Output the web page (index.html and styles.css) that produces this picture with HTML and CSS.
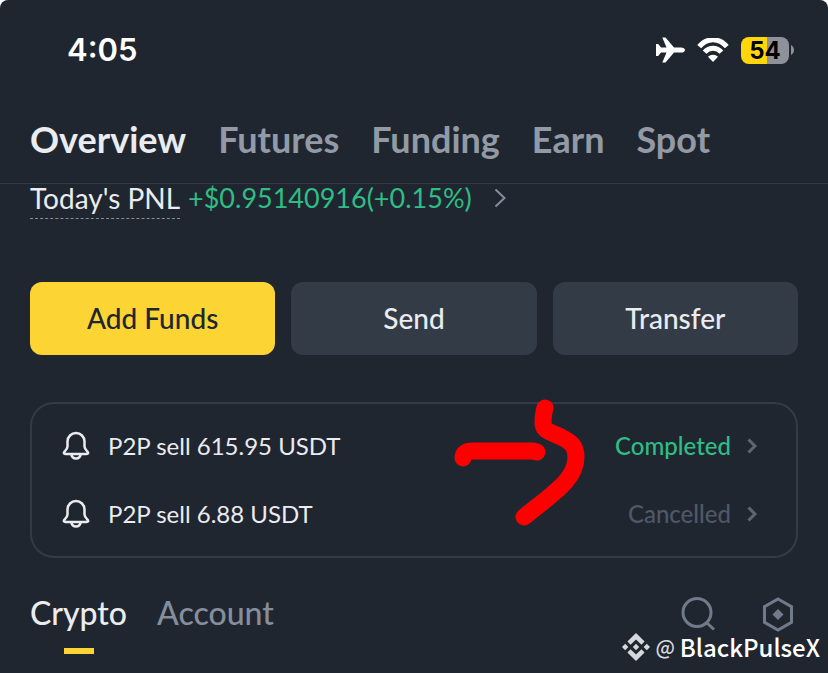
FILE: index.html
```html
<!DOCTYPE html>
<html lang="en">
<head>
<meta charset="utf-8">
<meta name="viewport" content="width=device-width, initial-scale=1">
<title>Wallet overview</title>
<link rel="stylesheet" href="styles.css">
</head>
<body>
<div class="app">
  <header class="status">
    <time class="clock">4:05</time>
    <div class="indicators">
      <svg class="plane" width="30" height="28" viewBox="0 0 30 28" aria-hidden="true"><path d="M30 14c0 1.700-1.800 2.600-4 2.600h-7L10.500 26.500H7.300L11.500 16.600H6L3.200 20H1V8h2.200L6 11.400h5.500L7.300 1.500h3.200L19 11.400h7c2.200 0 4 .9 4 2.600z"/></svg>
      <svg class="wifi" width="32" height="24" viewBox="0 0 32 24" aria-hidden="true"><path class="arc" d="M2.200 8.700C10-.6 22-.6 29.800 8.700M7.600 14.200c4.600-5.300 12.200-5.300 16.800 0"/><path d="M16 24l-5-5.200c2.600-2.800 7.400-2.800 10 0z"/></svg>
      <div class="battery"><span class="cell">54</span><svg width="3" height="10" viewBox="0 0 3 10" aria-hidden="true"><path d="M0 0c4 2 4 8 0 10z"/></svg></div>
    </div>
  </header>
  <nav class="tabs">
    <a class="active" href="#overview">Overview</a>
    <a href="#futures">Futures</a>
    <a href="#funding">Funding</a>
    <a href="#earn">Earn</a>
    <a href="#spot">Spot</a>
  </nav>
  <main>
    <a class="pnl" href="#pnl">
      <span class="pnl-label">Today's PNL</span>
      <span class="gain">+$0.95140916(+0.15%)</span>
      <svg width="12" height="20" viewBox="0 0 12 20" aria-hidden="true"><path d="M1.500 1.500L10.500 10l-9 8.500"/></svg>
    </a>
    <div class="actions">
      <button class="primary" type="button">Add Funds</button>
      <button type="button">Send</button>
      <button type="button">Transfer</button>
    </div>
    <section class="orders">
      <a class="order" href="#order-1">
        <svg class="bell" width="28" height="30" viewBox="0 0 28 30" aria-hidden="true"><path d="M5.500 10.500a8.500 8.500 0 0 1 17 0v5c0 2 1.200 3.300 2.800 5 1.500 1.500.9 2.500-.8 2.500h-21c-1.700 0-2.300-1-.8-2.500 1.600-1.700 2.800-3 2.800-5zM9.300 23.500c.6 2.700 2.200 4 4.700 4s4.100-1.300 4.700-4"/></svg>
        <span class="order-name">P2P sell 615.95 USDT</span>
        <span class="done">Completed</span>
        <svg class="chevron" width="10" height="16" viewBox="0 0 10 16" aria-hidden="true"><path d="M1.500 1.500L8 8l-6.500 6.500"/></svg>
      </a>
      <a class="order" href="#order-2">
        <svg class="bell" width="28" height="30" viewBox="0 0 28 30" aria-hidden="true"><path d="M5.500 10.500a8.500 8.500 0 0 1 17 0v5c0 2 1.200 3.300 2.800 5 1.500 1.500.9 2.500-.8 2.500h-21c-1.700 0-2.300-1-.8-2.500 1.600-1.700 2.800-3 2.800-5zM9.300 23.500c.6 2.700 2.200 4 4.700 4s4.100-1.300 4.700-4"/></svg>
        <span class="order-name">P2P sell 6.88 USDT</span>
        <span class="cancelled">Cancelled</span>
        <svg class="chevron" width="10" height="16" viewBox="0 0 10 16" aria-hidden="true"><path d="M1.500 1.500L8 8l-6.500 6.500"/></svg>
      </a>
      <svg class="marker" width="132" height="128" viewBox="0 0 132 128" aria-hidden="true"><path d="M9 59c0-5 3-7 10-7h60l4 1M91 9c-2 6-2 11-2 16 1 8 9 8 18 13 10 5 15 9 15 20 0 22-21 35-52 60"/></svg>
    </section>
    <div class="assets">
      <nav class="subtabs">
        <a class="active" href="#crypto">Crypto</a>
        <a href="#account">Account</a>
      </nav>
      <div class="tools">
        <button type="button" aria-label="Search"><svg width="36" height="36" viewBox="0 0 36 36"><circle cx="17" cy="16.500" r="14"/><path d="M27 27l7 6.500"/></svg></button>
        <button type="button" aria-label="Settings"><svg width="32" height="36" viewBox="0 0 32 36"><path d="M16 3l13.500 7.700v15.600L16 34 2.500 26.300V10.700z"/><path class="solid" d="M16 13l5.500 5.500L16 24l-5.500-5.500z"/></svg></button>
      </div>
    </div>
  </main>
  <div class="credit">
    <svg width="28" height="28" viewBox="0 0 28 28" aria-hidden="true"><path d="M14 0l8.600 8.600-3.200 3.200L14 6.400l-5.400 5.400-3.200-3.200zM3.200 10.800L6.400 14l-3.200 3.200L0 14zM14 10.800l3.200 3.200-3.200 3.200-3.200-3.200zM24.800 10.800L28 14l-3.200 3.200-3.200-3.200zM8.600 16.200l5.400 5.400 5.400-5.400 3.200 3.200L14 28l-8.600-8.600z"/></svg>
    <span class="at">@</span><span>BlackPulseX</span>
  </div>
</div>
</body>
</html>
```
FILE: styles.css
```css
* { box-sizing: border-box; }
body { margin: 0; background: #fff; font-family: Lato, "Liberation Sans", sans-serif; color: #eaecef; }
a { color: inherit; text-decoration: none; }
button { font: inherit; color: inherit; border: 0; padding: 0; background: none; }
svg { display: block; flex: none; fill: none; }
.app { position: relative; min-height: 100vh; background: #202630; border-radius: 8px 8px 0 0; overflow: hidden; }

.status { display: flex; align-items: center; justify-content: space-between; height: 100px; padding: 0 34px 0 67px; color: #fff; }
.clock { font: 600 31px/40px Inter, sans-serif; }
.indicators { display: flex; align-items: center; gap: 12px; }
.indicators > svg { fill: #fff; }
.wifi .arc { fill: none; stroke: #fff; stroke-width: 5; }
.battery { display: flex; align-items: center; gap: 2px; }
.battery svg { fill: #8e9199; }
.cell { width: 48px; border-radius: 8px; background: linear-gradient(90deg, #ffd60a 54%, #8e9199 54%); color: #000; font: 700 24px/27px Inter, sans-serif; text-align: center; }

.tabs { display: flex; align-items: center; gap: 32px; height: 84px; padding: 0 30px 6px; border-bottom: 1px solid #333b47; font-size: 36px; line-height: 42px; font-weight: 700; color: #929aa5; }
.tabs .active, .subtabs .active { color: #eaecef; }

main { padding: 0 30px; }
.pnl { display: flex; align-items: flex-start; gap: 8px; font-size: 27px; line-height: 28px; }
.pnl-label { padding-bottom: 6px; border-bottom: 1px dashed #848e9c; font-size: 28px; line-height: 28px; }
.gain { color: #2ebd85; }
.pnl svg { margin: 4px 0 0 14px; stroke: #848e9c; stroke-width: 2; }

.actions { display: grid; grid-template-columns: repeat(3, 1fr); gap: 16px; margin-top: 63px; }
.actions button { height: 73px; border-radius: 12px; background: #333b47; font-size: 28px; line-height: 32px; padding-bottom: 2px; font-weight: 500; }
.actions .primary { background: #fcd535; color: #202630; }

.orders { position: relative; margin-top: 47px; padding: 8px 39px 8px 30px; border: 2px solid #333b47; border-radius: 24px; }
.order { display: flex; align-items: center; height: 68px; font-size: 24px; line-height: 32px; }
.bell { stroke: #eaecef; stroke-width: 2.5; }
.order-name { flex: 1; margin-left: 18px; }
.done { color: #2ebd85; font-weight: 500; }
.cancelled { color: #4f5867; font-weight: 500; }
.chevron { margin-left: 16px; stroke: #5e6673; stroke-width: 3; }
.marker { position: absolute; left: 422px; top: -5px; stroke: #f00; stroke-width: 17; stroke-linecap: round; stroke-linejoin: round; }

.assets { display: flex; justify-content: space-between; margin-top: 35px; }
.subtabs { display: flex; gap: 30px; font-size: 32px; line-height: 40px; font-weight: 500; color: #848e9c; }
.subtabs .active::after { content: ""; display: block; width: 30px; height: 6px; margin: 15px auto 0; background: #fcd535; }
.tools { display: flex; align-items: flex-start; gap: 46px; padding-top: 3px; margin-right: 4px; }
.tools svg { stroke: #707a8a; stroke-width: 3; }
.tools .solid { fill: #707a8a; stroke: none; }

.credit { position: absolute; right: 8px; bottom: 9px; display: flex; align-items: center; gap: 5px; font: 500 24px/34px "Noto Sans CJK SC", sans-serif; color: #fff; }
.credit svg { fill: #d5d8dc; }
.at { font-size: 20px; color: #d5d8dc; }
```
